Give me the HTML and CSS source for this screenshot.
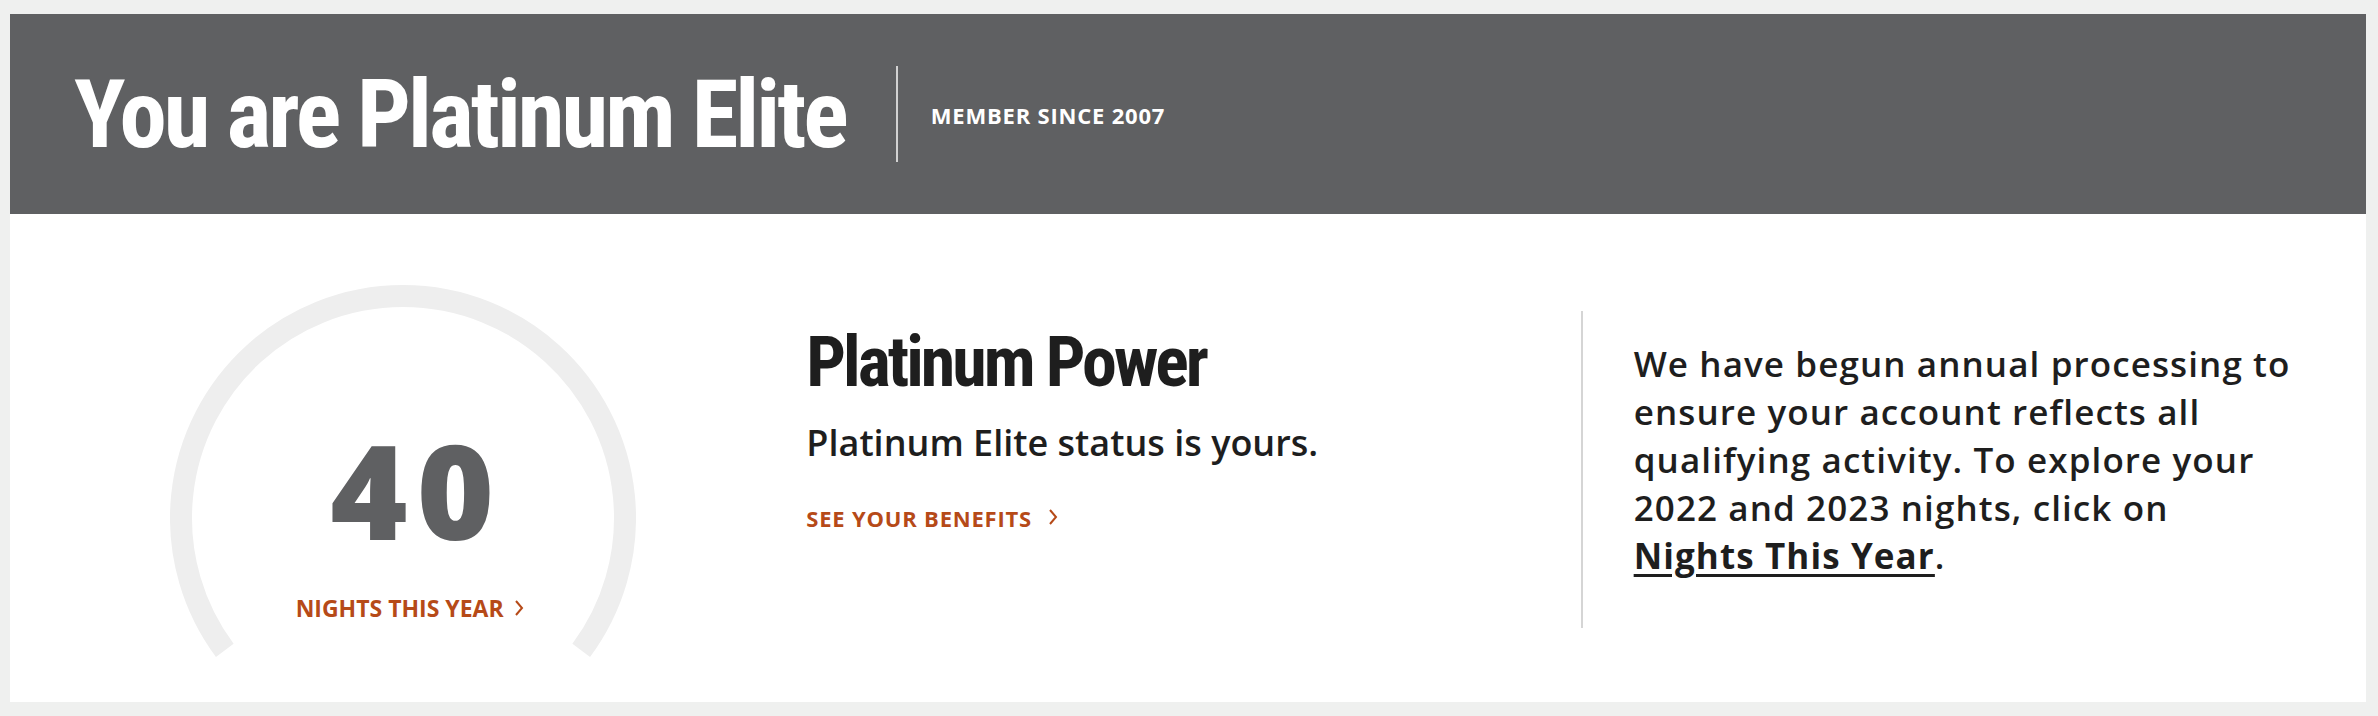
FILE: index.html
```html
<!DOCTYPE html>
<html lang="en">
<head>
<meta charset="utf-8">
<title>You are Platinum Elite</title>
<link rel="stylesheet" href="styles.css">
</head>
<body>
<div class="page">
  <section class="card">
    <header class="status-header">
      <h1 class="status-title">You are Platinum Elite</h1>
      <span class="status-sep"></span>
      <span class="member-since">MEMBER SINCE 2007</span>
    </header>
    <div class="status-body">
      <div class="col col-gauge">
        <div class="gauge">
          <svg class="gauge-arc" width="466" height="374" viewBox="0 0 466 374" aria-hidden="true">
            <path d="M 54.8 365.4 A 222 222 0 1 1 411.2 365.4" fill="none" stroke="#eeeeee" stroke-width="22"/>
          </svg>
          <div class="gauge-center">
            <span class="nights-count">40</span>
            <a class="link-caps" href="#">NIGHTS THIS YEAR<svg class="chev" width="10" height="18" viewBox="0 0 10 18"><path d="M2 2 L8 9 L2 16" fill="none" stroke="currentColor" stroke-width="2"/></svg></a>
          </div>
        </div>
      </div>
      <div class="col col-info">
        <h2 class="tier-title">Platinum Power</h2>
        <p class="tier-sub">Platinum Elite status is yours.</p>
        <a class="link-caps link-benefits" href="#">SEE YOUR BENEFITS<svg class="chev" width="10" height="18" viewBox="0 0 10 18"><path d="M2 2 L8 9 L2 16" fill="none" stroke="currentColor" stroke-width="2"/></svg></a>
      </div>
      <div class="col col-note">
        <p class="note">We have begun annual processing to<br>ensure your account reflects all<br>qualifying activity. To explore your<br>2022 and 2023 nights, click on<br><a class="note-link" href="#">Nights This Year</a>.</p>
      </div>
    </div>
  </section>
</div>
</body>
</html>
```
FILE: styles.css
```css
* { box-sizing: border-box; }

html, body {
  margin: 0;
  padding: 0;
  background: #eff0ef;
}

body {
  font-family: "Open Sans", "Lato", "Liberation Sans", sans-serif;
  color: #1e1e1e;
}

.page {
  padding: 14px 12px 14px 10px;
}

.card {
  background: #ffffff;
}

/* Header */
.status-header {
  height: 200px;
  background: #5f6062;
  display: flex;
  align-items: center;
  padding-left: 64px;
}

.status-title {
  margin: 0;
  font-family: "Liberation Sans Narrow", "Roboto Condensed", "DejaVu Sans Condensed", "Liberation Sans", sans-serif;
  font-stretch: condensed;
  font-weight: 700;
  font-size: 95px;
  line-height: 1;
  letter-spacing: -3px;
  color: #ffffff;
}

.status-sep {
  width: 2px;
  height: 96px;
  background: #d2d2d2;
  margin-left: 50px;
  margin-right: 33px;
}

.member-since {
  color: #ffffff;
  font-weight: 700;
  font-size: 22px;
  letter-spacing: 0.8px;
  line-height: 1;
  padding-top: 2px;
}

/* Body */
.status-body {
  height: 488px;
  display: grid;
  grid-template-columns: 1fr 1fr 1fr;
}

.col-gauge {
  display: flex;
  justify-content: center;
  padding-top: 71px;
}

.gauge {
  position: relative;
  width: 466px;
  height: 374px;
}

.gauge-arc {
  display: block;
}

.gauge-center {
  position: absolute;
  left: 0;
  right: 0;
  top: 138px;
  padding-left: 14px;
  display: flex;
  flex-direction: column;
  align-items: center;
  gap: 42px;
}

.nights-count {
  font-size: 132px;
  font-weight: 800;
  line-height: 1;
  color: #5f6062;
  letter-spacing: 9px;
  margin-left: 14px;
}

.link-caps {
  display: inline-flex;
  align-items: center;
  color: #b64a18;
  text-decoration: none;
  font-weight: 700;
  font-size: 23px;
  line-height: 1;
}

.link-caps .chev {
  margin-left: 10px;
  margin-top: -2px;
}

/* Middle column */
.col-info {
  padding-top: 113px;
  padding-left: 11px;
}

.tier-title {
  margin: 0;
  font-family: "Liberation Sans Narrow", "Roboto Condensed", "DejaVu Sans Condensed", "Liberation Sans", sans-serif;
  font-stretch: condensed;
  font-weight: 700;
  font-size: 70px;
  line-height: 1;
  letter-spacing: -3px;
  color: #1e1e1e;
}

.tier-sub {
  margin: 28px 0 0;
  font-size: 36px;
  font-weight: 600;
  line-height: 1;
}

.link-benefits {
  margin-top: 46px;
  font-size: 22px;
  letter-spacing: 0.8px;
}

.link-benefits .chev {
  margin-left: 16px;
}

/* Right column */
.col-note {
  margin: 97px 0 74px;
  border-left: 2px solid #d5d5d5;
  padding: 29px 20px 0 51px;
}

.note {
  margin: 0;
  font-size: 35px;
  font-weight: 600;
  line-height: 48px;
  letter-spacing: 1.1px;
  white-space: nowrap;
}

.note-link {
  color: #1e1e1e;
  font-weight: 700;
  text-decoration: underline;
  text-decoration-thickness: 3px;
  text-underline-offset: 5px;
}
```
